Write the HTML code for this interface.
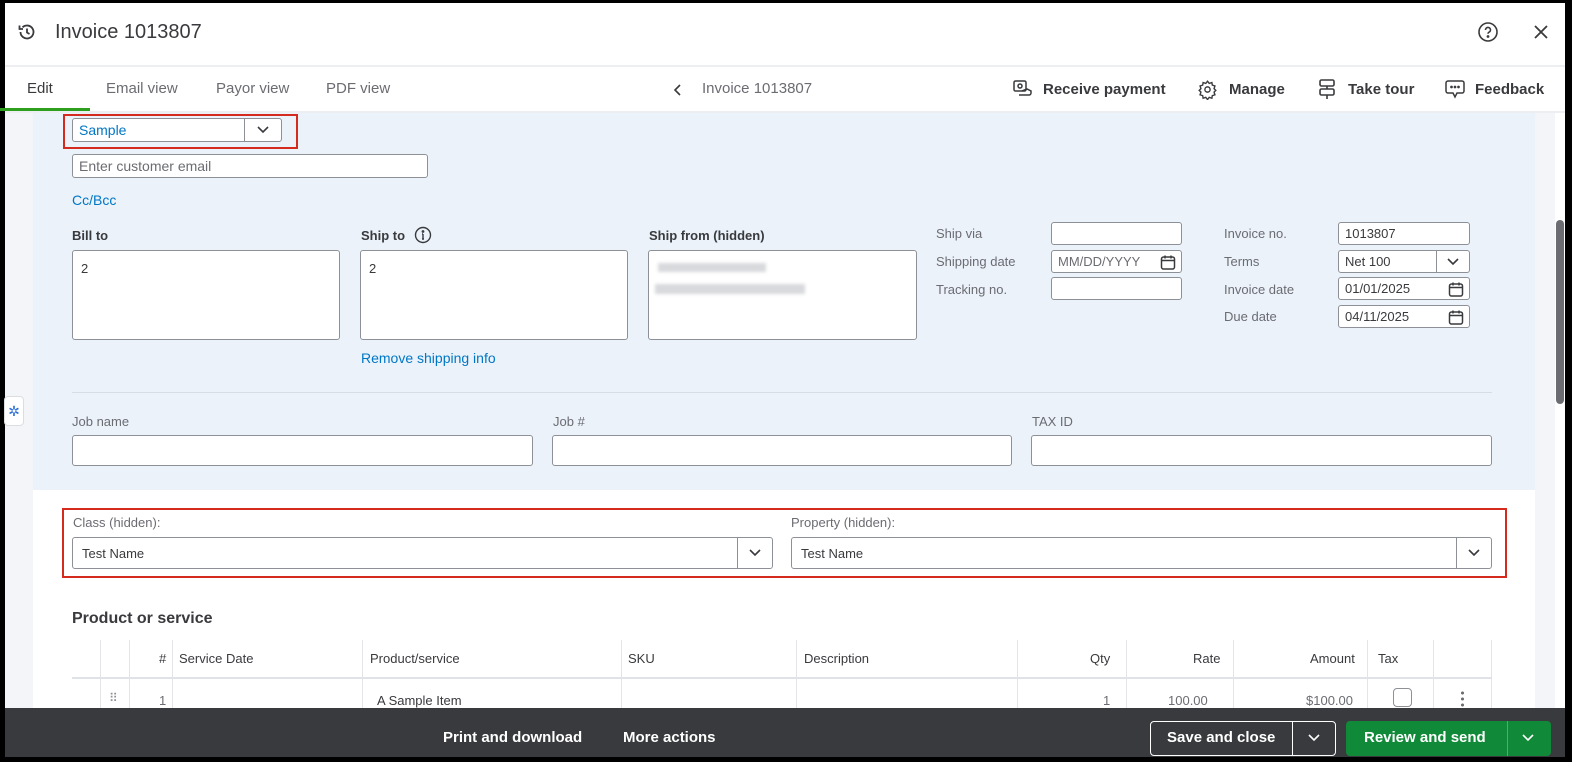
<!DOCTYPE html>
<html><head><meta charset="utf-8"><style>
*{box-sizing:border-box;margin:0;padding:0}
body{width:1572px;height:762px;position:relative;overflow:hidden;background:#000;font-family:"Liberation Sans",sans-serif;color:#393a3d}
.a{position:absolute}
.inp{position:absolute;background:#fff;border:1px solid #8d9096;border-radius:3px;font-size:13px;color:#393a3d;padding-left:6px;display:flex;align-items:center}
.lbl{position:absolute;font-size:13px;color:#6b6c72}
.b{position:absolute;font-size:13px;font-weight:bold;color:#393a3d}
.chev{position:absolute;top:0;bottom:0;right:0;border-left:1px solid #8d9096;display:flex;align-items:center;justify-content:center}
.cal{position:absolute;right:5px;top:4px}
.th{position:absolute;top:651px;font-size:13px;color:#393a3d}
.vl{position:absolute;top:640px;height:68px;width:1px;background:#e3e5e8}
</style></head><body>
<div class="a" style="left:5px;top:3px;width:1560px;height:754px;background:#fff"></div>
<!-- header -->
<svg class="a" style="left:17px;top:22px" width="20" height="20" viewBox="0 0 20 20" fill="none" stroke="#393a3d" stroke-width="1.8"><path d="M3.5 10a6.5 6.5 0 1 0 2-4.7"/><path d="M2.5 3.5v3.5h3.5"/><path d="M10 6.5v4l2.5 1.5"/></svg>
<div class="a" style="left:55px;top:21px;font-size:20px;color:#393a3d">Invoice 1013807</div>
<svg class="a" style="left:1477px;top:21px" width="22" height="22" viewBox="0 0 22 22" fill="none" stroke="#393a3d" stroke-width="1.6"><circle cx="11" cy="11" r="9"/><path d="M8.5 9a2.5 2.5 0 1 1 3.5 2.2c-.7.4-1 .8-1 1.6"/><circle cx="11" cy="15.5" r=".6" fill="#393a3d"/></svg>
<svg class="a" style="left:1533px;top:24px" width="16" height="16" viewBox="0 0 16 16" stroke="#393a3d" stroke-width="1.8"><path d="M2 2l12 12M14 2L2 14"/></svg>
<div class="a" style="left:5px;top:65px;width:1560px;height:2px;background:#eceef1"></div>
<!-- tabs -->
<div class="a" style="left:27px;top:80px;font-size:15px;color:#393a3d">Edit</div>
<div class="a" style="left:106px;top:80px;font-size:15px;color:#6b6c72">Email view</div>
<div class="a" style="left:216px;top:80px;font-size:15px;color:#6b6c72">Payor view</div>
<div class="a" style="left:326px;top:80px;font-size:15px;color:#6b6c72">PDF view</div>
<div class="a" style="left:0;top:108px;width:90px;height:3px;background:#2ca01c"></div>
<svg class="a" style="left:672px;top:83px" width="12" height="14" viewBox="0 0 12 14" fill="none" stroke="#393a3d" stroke-width="1.6"><path d="M8 2L3 7l5 5"/></svg>
<div class="a" style="left:702px;top:80px;font-size:15px;color:#6b6c72">Invoice 1013807</div>
<svg class="a" style="left:1012px;top:79px" width="22" height="20" viewBox="0 0 22 20" fill="none" stroke="#393a3d" stroke-width="1.5"><rect x="2" y="2" width="12" height="10" rx="1.5"/><circle cx="8" cy="7" r="2"/><path d="M7 16h10a2 2 0 0 0 2-2v-2l-4-2-5 2"/></svg>
<div class="a" style="left:1043px;top:81px;font-size:15px;font-weight:bold;color:#393a3d">Receive payment</div>
<svg class="a" style="left:1197px;top:79px" width="21" height="21" viewBox="0 0 24 24" fill="none" stroke="#393a3d" stroke-width="1.6"><circle cx="12" cy="12" r="3"/><path d="M12 2.5l2 2.5 3-1 .5 3 3 1-1 3 2 2-2 2 1 3-3 1-.5 3-3-1-2 2.5-2-2.5-3 1-.5-3-3-1 1-3-2-2 2-2-1-3 3-1 .5-3 3 1z"/></svg>
<div class="a" style="left:1229px;top:81px;font-size:15px;font-weight:bold;color:#393a3d">Manage</div>
<svg class="a" style="left:1317px;top:78px" width="20" height="22" viewBox="0 0 20 22" fill="none" stroke="#393a3d" stroke-width="1.6"><rect x="3" y="2" width="14" height="6" rx="1.5"/><rect x="3" y="11" width="14" height="6" rx="1.5"/><path d="M10 8v3M10 17v4"/></svg>
<div class="a" style="left:1348px;top:81px;font-size:15px;font-weight:bold;color:#393a3d">Take tour</div>
<svg class="a" style="left:1444px;top:78px" width="22" height="22" viewBox="0 0 22 22" fill="none" stroke="#393a3d" stroke-width="1.5"><path d="M4 3h14a2 2 0 0 1 2 2v8a2 2 0 0 1-2 2h-5l-2 4-2-4H4a2 2 0 0 1-2-2V5a2 2 0 0 1 2-2z"/><circle cx="7.5" cy="9" r=".6" fill="#393a3d"/><circle cx="11" cy="9" r=".6" fill="#393a3d"/><circle cx="14.5" cy="9" r=".6" fill="#393a3d"/></svg>
<div class="a" style="left:1475px;top:81px;font-size:15px;font-weight:bold;color:#393a3d">Feedback</div>
<div class="a" style="left:5px;top:111px;width:1560px;height:2px;background:#eceef1"></div>
<!-- side strips -->
<div class="a" style="left:5px;top:113px;width:28px;height:595px;background:#f4f5f8"></div>
<div class="a" style="left:1535px;top:113px;width:20px;height:595px;background:#f4f5f8"></div>
<div class="a" style="left:1555px;top:113px;width:10px;height:595px;background:#fff"></div>
<div class="a" style="left:1556px;top:220px;width:8px;height:184px;background:#6b6c72;border-radius:4px"></div>
<div class="a" style="left:4px;top:396px;width:20px;height:30px;background:#fff;border:1px solid #dcdde0;border-radius:4px;color:#2d6fd6;font-size:14px;text-align:center;line-height:28px">✲</div>
<!-- blue panel -->
<div class="a" style="left:33px;top:113px;width:1502px;height:377px;background:#ebf2fa"></div>
<div class="a" style="left:33px;top:490px;width:1502px;height:218px;background:#fff"></div>
<div class="a" style="left:63px;top:114px;width:235px;height:35px;border:2px solid #d52b1e"></div>
<div class="inp" style="left:72px;top:118px;width:210px;height:24px;color:#0077c5;font-size:14px">Sample<div class="chev" style="width:37px"><svg width="14" height="10" viewBox="0 0 14 10" fill="none" stroke="#393a3d" stroke-width="1.6"><path d="M2 2l5 5 5-5"/></svg></div></div>
<div class="inp" style="left:72px;top:154px;width:356px;height:24px;color:#6b6c72;font-size:14px">Enter customer email</div>
<div class="a" style="left:72px;top:192px;font-size:14px;color:#0077c5">Cc/Bcc</div>
<div class="b" style="left:72px;top:228px">Bill to</div>
<div class="b" style="left:361px;top:228px">Ship to</div>
<svg class="a" style="left:414px;top:226px" width="18" height="18" viewBox="0 0 18 18" fill="none" stroke="#393a3d" stroke-width="1.4"><circle cx="9" cy="9" r="7.5"/><path d="M9 8v5M8 13h2M8 8h1"/><circle cx="9" cy="5.5" r=".7" fill="#393a3d"/></svg>
<div class="b" style="left:649px;top:228px">Ship from (hidden)</div>
<div class="inp" style="left:72px;top:250px;width:268px;height:90px;align-items:flex-start;padding-top:10px;padding-left:8px">2</div>
<div class="inp" style="left:360px;top:250px;width:268px;height:90px;align-items:flex-start;padding-top:10px;padding-left:8px">2</div>
<div class="inp" style="left:648px;top:250px;width:269px;height:90px"></div>
<div class="a" style="left:658px;top:263px;width:108px;height:9px;background:#d8d9dc;filter:blur(1.5px)"></div>
<div class="a" style="left:655px;top:284px;width:150px;height:10px;background:#d8d9dc;filter:blur(1.5px)"></div>
<div class="a" style="left:361px;top:350px;font-size:14px;color:#0077c5">Remove shipping info</div>
<div class="lbl" style="left:936px;top:226px">Ship via</div>
<div class="lbl" style="left:936px;top:254px">Shipping date</div>
<div class="lbl" style="left:936px;top:282px">Tracking no.</div>
<div class="inp" style="left:1051px;top:222px;width:131px;height:23px"></div>
<div class="inp" style="left:1051px;top:250px;width:131px;height:23px;color:#6b6c72">MM/DD/YYYY<svg class="cal" width="16" height="15" viewBox="0 0 16 15" fill="none" stroke="#393a3d" stroke-width="1.5"><rect x="1.5" y="2" width="13" height="12" rx="2"/><path d="M1.5 5.5h13M5 .5v3M11 .5v3"/></svg></div>
<div class="inp" style="left:1051px;top:277px;width:131px;height:23px"></div>
<div class="lbl" style="left:1224px;top:226px">Invoice no.</div>
<div class="lbl" style="left:1224px;top:254px">Terms</div>
<div class="lbl" style="left:1224px;top:282px">Invoice date</div>
<div class="lbl" style="left:1224px;top:309px">Due date</div>
<div class="inp" style="left:1338px;top:222px;width:132px;height:23px">1013807</div>
<div class="inp" style="left:1338px;top:250px;width:132px;height:23px">Net 100<div class="chev" style="width:33px"><svg width="14" height="10" viewBox="0 0 14 10" fill="none" stroke="#393a3d" stroke-width="1.6"><path d="M2 2l5 5 5-5"/></svg></div></div>
<div class="inp" style="left:1338px;top:277px;width:132px;height:23px">01/01/2025<svg class="cal" width="16" height="15" viewBox="0 0 16 15" fill="none" stroke="#393a3d" stroke-width="1.5"><rect x="1.5" y="2" width="13" height="12" rx="2"/><path d="M1.5 5.5h13M5 .5v3M11 .5v3"/></svg></div>
<div class="inp" style="left:1338px;top:305px;width:132px;height:23px">04/11/2025<svg class="cal" width="16" height="15" viewBox="0 0 16 15" fill="none" stroke="#393a3d" stroke-width="1.5"><rect x="1.5" y="2" width="13" height="12" rx="2"/><path d="M1.5 5.5h13M5 .5v3M11 .5v3"/></svg></div>
<div class="a" style="left:72px;top:392px;width:1420px;height:1px;background:#d8dde5"></div>
<div class="lbl" style="left:72px;top:414px">Job name</div>
<div class="lbl" style="left:553px;top:414px">Job #</div>
<div class="lbl" style="left:1032px;top:414px">TAX ID</div>
<div class="inp" style="left:72px;top:435px;width:461px;height:31px"></div>
<div class="inp" style="left:552px;top:435px;width:460px;height:31px"></div>
<div class="inp" style="left:1031px;top:435px;width:461px;height:31px"></div>
<!-- class/property -->
<div class="a" style="left:62px;top:508px;width:1445px;height:70px;border:2px solid #d52b1e"></div>
<div class="lbl" style="left:73px;top:515px">Class (hidden):</div>
<div class="lbl" style="left:791px;top:515px">Property (hidden):</div>
<div class="inp" style="left:72px;top:537px;width:701px;height:32px;padding-left:9px">Test Name<div class="chev" style="width:35px"><svg width="14" height="10" viewBox="0 0 14 10" fill="none" stroke="#393a3d" stroke-width="1.6"><path d="M2 2l5 5 5-5"/></svg></div></div>
<div class="inp" style="left:791px;top:537px;width:701px;height:32px;padding-left:9px">Test Name<div class="chev" style="width:35px"><svg width="14" height="10" viewBox="0 0 14 10" fill="none" stroke="#393a3d" stroke-width="1.6"><path d="M2 2l5 5 5-5"/></svg></div></div>
<!-- table -->
<div class="a" style="left:72px;top:610px;font-size:16px;font-weight:bold;color:#393a3d">Product or service</div>
<div class="vl" style="left:100px"></div><div class="vl" style="left:129px"></div><div class="vl" style="left:172px"></div><div class="vl" style="left:362px"></div><div class="vl" style="left:621px"></div><div class="vl" style="left:796px"></div><div class="vl" style="left:1017px"></div><div class="vl" style="left:1126px"></div><div class="vl" style="left:1233px"></div><div class="vl" style="left:1367px"></div><div class="vl" style="left:1433px"></div><div class="vl" style="left:1491px"></div>
<div class="a" style="left:72px;top:677px;width:1420px;height:2px;background:#dfe2e6"></div>
<div class="th" style="left:159px">#</div>
<div class="th" style="left:179px">Service Date</div>
<div class="th" style="left:370px">Product/service</div>
<div class="th" style="left:628px">SKU</div>
<div class="th" style="left:804px">Description</div>
<div class="th" style="left:1090px">Qty</div>
<div class="th" style="left:1193px">Rate</div>
<div class="th" style="left:1310px">Amount</div>
<div class="th" style="left:1378px">Tax</div>
<div class="a" style="left:109px;top:691px;font-size:12px;color:#8d9096;letter-spacing:-1px">⠿</div>
<div class="a" style="left:159px;top:693px;font-size:13px;color:#6b6c72">1</div>
<div class="a" style="left:377px;top:693px;font-size:13px;color:#393a3d">A Sample Item</div>
<div class="a" style="left:1103px;top:693px;font-size:13px;color:#6b6c72">1</div>
<div class="a" style="left:1168px;top:693px;font-size:13px;color:#6b6c72">100.00</div>
<div class="a" style="left:1306px;top:693px;font-size:13px;color:#6b6c72">$100.00</div>
<div class="a" style="left:1393px;top:688px;width:19px;height:19px;border:1px solid #8d9096;border-radius:4px;background:#fff"></div>
<div class="a" style="left:1461px;top:690px;width:3px;height:18px;background:radial-gradient(circle,#6b6c72 1.4px,transparent 1.6px) 0 0/3px 6px"></div>
<!-- footer -->
<div class="a" style="left:5px;top:708px;width:1560px;height:49px;background:#393a3d"></div>
<div class="a" style="left:443px;top:729px;font-size:15px;font-weight:bold;color:#fff">Print and download</div>
<div class="a" style="left:623px;top:729px;font-size:15px;font-weight:bold;color:#fff">More actions</div>
<div class="a" style="left:1150px;top:721px;width:186px;height:35px;border:1px solid #fff;border-radius:4px"></div>
<div class="a" style="left:1292px;top:721px;width:1px;height:35px;background:#fff"></div>
<div class="a" style="left:1167px;top:729px;font-size:15px;font-weight:bold;color:#fff">Save and close</div>
<svg class="a" style="left:1307px;top:733px" width="14" height="10" viewBox="0 0 14 10" fill="none" stroke="#fff" stroke-width="1.6"><path d="M2 2l5 5 5-5"/></svg>
<div class="a" style="left:1346px;top:721px;width:205px;height:35px;background:#108a38;border-radius:4px"></div>
<div class="a" style="left:1507px;top:721px;width:1px;height:35px;background:#4fae6c"></div>
<div class="a" style="left:1364px;top:729px;font-size:15px;font-weight:bold;color:#fff">Review and send</div>
<svg class="a" style="left:1521px;top:733px" width="14" height="10" viewBox="0 0 14 10" fill="none" stroke="#fff" stroke-width="1.6"><path d="M2 2l5 5 5-5"/></svg>
</body></html>
